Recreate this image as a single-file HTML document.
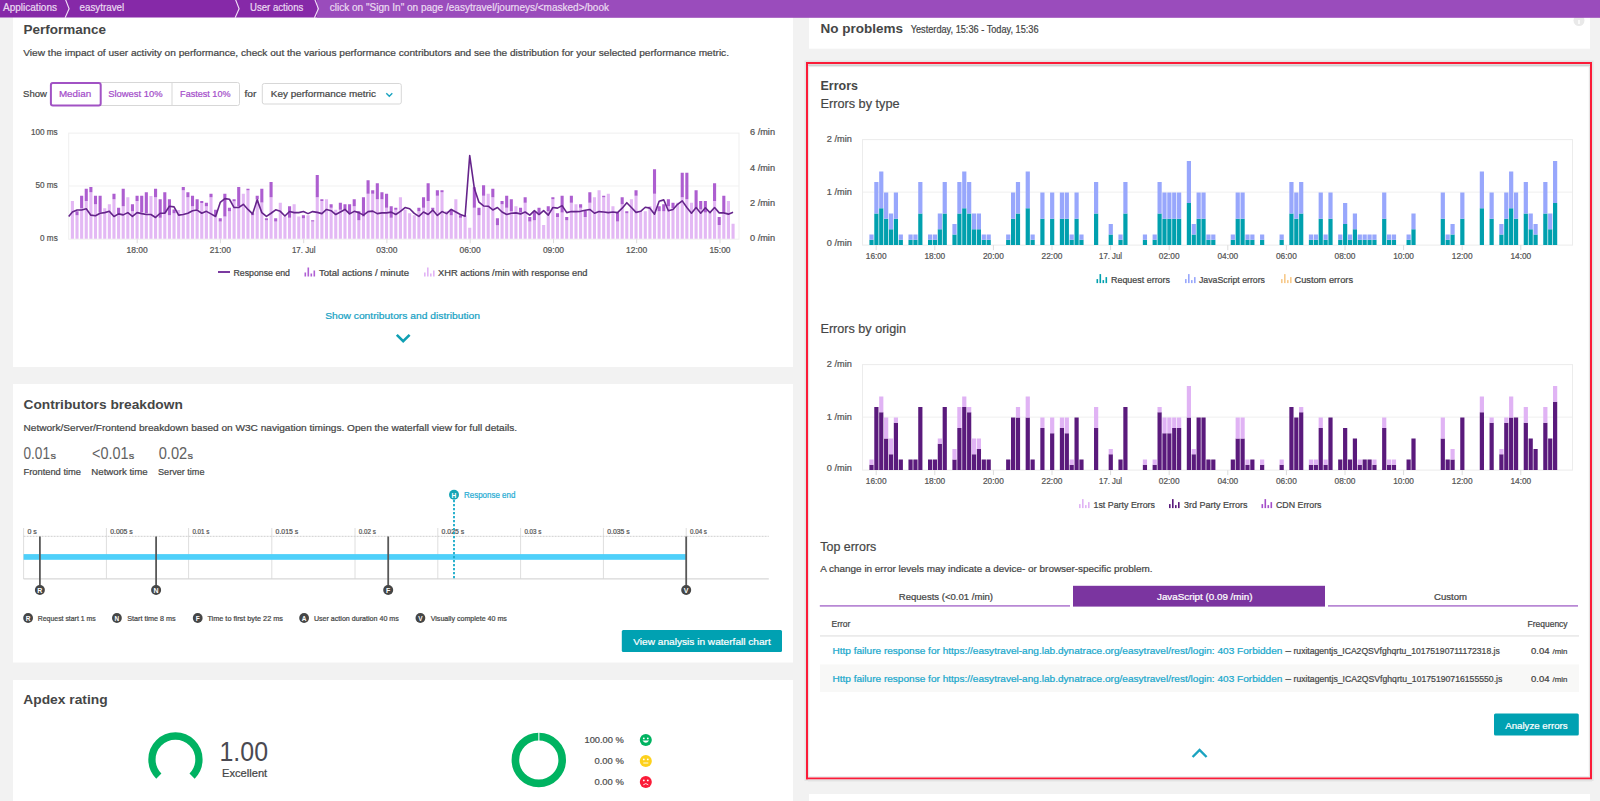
<!DOCTYPE html><html><head><meta charset="utf-8"><style>html,body{margin:0;padding:0;background:#f2f2f2;overflow:hidden}</style></head><body><svg width="1600" height="801" viewBox="0 0 1600 801" style="display:block;font-family:'Liberation Sans', sans-serif">
<rect x="0.00" y="0.00" width="1600.00" height="801.00" fill="#f2f2f2"/>
<rect x="13.00" y="17.00" width="780.00" height="350.00" fill="#ffffff"/>
<rect x="13.00" y="384.00" width="780.00" height="278.50" fill="#ffffff"/>
<rect x="13.00" y="680.00" width="780.00" height="130.00" fill="#ffffff"/>
<rect x="809.00" y="17.00" width="781.00" height="31.70" fill="#ffffff"/>
<rect x="809.00" y="794.00" width="781.00" height="20.00" fill="#ffffff"/>
<circle cx="1579" cy="20.5" r="5.5" fill="#e9e9e9"/><rect x="1578.3" y="20" width="1.4" height="4" fill="#fff"/>
<rect x="0.00" y="0.00" width="1600.00" height="17.50" fill="#8629a8"/>
<rect x="317.00" y="0.00" width="1283.00" height="17.50" fill="#9a4cbc"/>
<path d="M65.5,-0.5 L69.1,8.7 L65.1,17.8" fill="none" stroke="#f3e3f8" stroke-width="1.1"/>
<path d="M235.5,-0.5 L239.1,8.7 L235.1,17.8" fill="none" stroke="#f3e3f8" stroke-width="1.1"/>
<path d="M314.8,-0.5 L318.4,8.7 L314.4,17.8" fill="none" stroke="#f3e3f8" stroke-width="1.1"/>
<text x="3.0" y="10.5" font-size="10.4" fill="#eadaf1" stroke="#eadaf1" stroke-width="0.22" textLength="54.0" lengthAdjust="spacingAndGlyphs">Applications</text>
<text x="79.6" y="10.5" font-size="10.4" fill="#eadaf1" stroke="#eadaf1" stroke-width="0.22" textLength="44.6" lengthAdjust="spacingAndGlyphs">easytravel</text>
<text x="250.0" y="10.5" font-size="10.4" fill="#eadaf1" stroke="#eadaf1" stroke-width="0.22" textLength="53.3" lengthAdjust="spacingAndGlyphs">User actions</text>
<text x="329.8" y="10.5" font-size="10.4" fill="#eadaf1" stroke="#eadaf1" stroke-width="0.22" textLength="279.2" lengthAdjust="spacingAndGlyphs">click on "Sign In" on page /easytravel/journeys/&lt;masked&gt;/book</text>
<text x="23.5" y="33.7" font-size="12.8" font-weight="bold" fill="#454646" textLength="82.5" lengthAdjust="spacingAndGlyphs">Performance</text>
<text x="23.3" y="55.5" font-size="9.4" fill="#454646" stroke="#454646" stroke-width="0.22" textLength="705.7" lengthAdjust="spacingAndGlyphs">View the impact of user activity on performance, check out the various performance contributors and see the distribution for your selected performance metric.</text>
<text x="23.1" y="96.6" font-size="9.4" fill="#454646" stroke="#454646" stroke-width="0.22" textLength="23.8" lengthAdjust="spacingAndGlyphs">Show</text>
<rect x="50.5" y="82.5" width="189" height="23" rx="2" fill="#fff" stroke="#d7d7d7" stroke-width="1"/>
<line x1="172" y1="83" x2="172" y2="105" stroke="#d7d7d7" stroke-width="1"/>
<rect x="50.9" y="83.1" width="49.8" height="22.4" rx="2" fill="#fff" stroke="#a152c4" stroke-width="2"/>
<text x="58.9" y="96.6" font-size="9.4" fill="#a44dca" stroke="#a44dca" stroke-width="0.22" textLength="32.2" lengthAdjust="spacingAndGlyphs">Median</text>
<text x="108.2" y="96.6" font-size="9.4" fill="#a44dca" stroke="#a44dca" stroke-width="0.22" textLength="54.4" lengthAdjust="spacingAndGlyphs">Slowest 10%</text>
<text x="180.1" y="96.6" font-size="9.4" fill="#a44dca" stroke="#a44dca" stroke-width="0.22" textLength="50.4" lengthAdjust="spacingAndGlyphs">Fastest 10%</text>
<text x="244.5" y="96.9" font-size="9.4" fill="#454646" stroke="#454646" stroke-width="0.22" textLength="12.0" lengthAdjust="spacingAndGlyphs">for</text>
<rect x="262.3" y="83.5" width="139" height="20.5" rx="2" fill="#fff" stroke="#d7d7d7" stroke-width="1"/>
<text x="270.8" y="97.1" font-size="9.4" fill="#454646" stroke="#454646" stroke-width="0.22" textLength="105.2" lengthAdjust="spacingAndGlyphs">Key performance metric</text>
<path d="M386.3,93.3 L389.3,96.3 L392.3,93.3" fill="none" stroke="#1aa3c0" stroke-width="1.4"/>
<rect x="68.7" y="133.1" width="670.3" height="106.1" fill="none" stroke="#efefef" stroke-width="1"/>
<line x1="68.7" y1="186" x2="739" y2="186" stroke="#f1f1f1" stroke-width="1"/>
<path d="M70.85,238.73V200.89h3.1V238.73zM75.47,238.73V215.16h3.1V238.73zM80.09,238.73V208.15h3.1V238.73zM84.71,238.73V200.89h3.1V238.73zM89.33,238.73V192.23h3.1V238.73zM93.95,238.73V204.33h3.1V238.73zM98.57,238.73V212.61h3.1V238.73zM103.19,238.73V208.15h3.1V238.73zM107.81,238.73V204.33h3.1V238.73zM112.43,238.73V199.24h3.1V238.73zM117.05,238.73V213.89h3.1V238.73zM121.67,238.73V206.24h3.1V238.73zM126.29,238.73V197.32h3.1V238.73zM130.91,238.73V211.34h3.1V238.73zM135.53,238.73V200.89h3.1V238.73zM140.15,238.73V212.61h3.1V238.73zM144.77,238.73V213.25h3.1V238.73zM149.39,238.73V196.05h3.1V238.73zM154.01,238.73V197.32h3.1V238.73zM158.63,238.73V217.71h3.1V238.73zM163.25,238.73V213.25h3.1V238.73zM167.87,238.73V215.16h3.1V238.73zM172.49,238.73V213.25h3.1V238.73zM177.11,238.73V210.06h3.1V238.73zM181.73,238.73V190.32h3.1V238.73zM186.35,238.73V197.32h3.1V238.73zM190.97,238.73V206.24h3.1V238.73zM195.59,238.73V209.43h3.1V238.73zM200.21,238.73V203.06h3.1V238.73zM204.83,238.73V206.24h3.1V238.73zM209.45,238.73V197.32h3.1V238.73zM214.07,238.73V215.16h3.1V238.73zM218.69,238.73V221.53h3.1V238.73zM223.31,238.73V216.43h3.1V238.73zM227.93,238.73V211.34h3.1V238.73zM232.55,238.73V201.15h3.1V238.73zM237.17,238.73V206.24h3.1V238.73zM241.79,238.73V193.76h3.1V238.73zM246.41,238.73V190.32h3.1V238.73zM251.03,238.73V215.16h3.1V238.73zM255.65,238.73V199.24h3.1V238.73zM260.27,238.73V202.42h3.1V238.73zM264.89,238.73V220.25h3.1V238.73zM269.51,238.73V197.32h3.1V238.73zM274.13,238.73V221.53h3.1V238.73zM278.75,238.73V202.68h3.1V238.73zM283.37,238.73V216.43h3.1V238.73zM287.99,238.73V217.71h3.1V238.73zM292.61,238.73V204.33h3.1V238.73zM297.23,238.73V216.43h3.1V238.73zM301.85,238.73V218.34h3.1V238.73zM306.47,238.73V215.16h3.1V238.73zM311.09,238.73V221.53h3.1V238.73zM315.71,238.73V197.32h3.1V238.73zM320.33,238.73V200.89h3.1V238.73zM324.95,238.73V199.24h3.1V238.73zM329.57,238.73V207.77h3.1V238.73zM334.19,238.73V209.81h3.1V238.73zM338.81,238.73V209.81h3.1V238.73zM343.43,238.73V209.81h3.1V238.73zM348.05,238.73V213.89h3.1V238.73zM352.67,238.73V206.24h3.1V238.73zM357.29,238.73V220.25h3.1V238.73zM361.91,238.73V216.43h3.1V238.73zM366.53,238.73V193.76h3.1V238.73zM371.15,238.73V193.76h3.1V238.73zM375.77,238.73V199.24h3.1V238.73zM380.39,238.73V199.24h3.1V238.73zM385.01,238.73V207.77h3.1V238.73zM389.63,238.73V217.71h3.1V238.73zM394.25,238.73V209.81h3.1V238.73zM398.87,238.73V197.32h3.1V238.73zM403.49,238.73V209.81h3.1V238.73zM408.11,238.73V213.25h3.1V238.73zM412.73,238.73V215.16h3.1V238.73zM417.35,238.73V211.34h3.1V238.73zM421.97,238.73V207.77h3.1V238.73zM426.59,238.73V200.89h3.1V238.73zM431.21,238.73V209.81h3.1V238.73zM435.83,238.73V195.80h3.1V238.73zM440.45,238.73V192.23h3.1V238.73zM445.07,238.73V211.34h3.1V238.73zM449.69,238.73V215.16h3.1V238.73zM454.31,238.73V199.24h3.1V238.73zM458.93,238.73V217.71h3.1V238.73zM463.55,238.73V215.16h3.1V238.73zM468.17,238.73V227.64h3.1V238.73zM472.79,238.73V207.77h3.1V238.73zM477.41,238.73V215.16h3.1V238.73zM482.03,238.73V195.80h3.1V238.73zM486.65,238.73V193.76h3.1V238.73zM491.27,238.73V197.32h3.1V238.73zM495.89,238.73V225.35h3.1V238.73zM500.51,238.73V204.33h3.1V238.73zM505.13,238.73V207.77h3.1V238.73zM509.75,238.73V211.34h3.1V238.73zM514.37,238.73V206.24h3.1V238.73zM518.99,238.73V212.61h3.1V238.73zM523.61,238.73V202.68h3.1V238.73zM528.23,238.73V221.53h3.1V238.73zM532.85,238.73V220.25h3.1V238.73zM537.47,238.73V213.25h3.1V238.73zM542.09,238.73V225.10h3.1V238.73zM546.71,238.73V211.34h3.1V238.73zM551.33,238.73V199.24h3.1V238.73zM555.95,238.73V217.07h3.1V238.73zM560.57,238.73V212.61h3.1V238.73zM565.19,238.73V220.25h3.1V238.73zM569.81,238.73V202.68h3.1V238.73zM574.43,238.73V204.33h3.1V238.73zM579.05,238.73V207.77h3.1V238.73zM583.67,238.73V217.07h3.1V238.73zM588.29,238.73V202.68h3.1V238.73zM592.91,238.73V197.32h3.1V238.73zM597.53,238.73V190.32h3.1V238.73zM602.15,238.73V197.32h3.1V238.73zM606.77,238.73V193.76h3.1V238.73zM611.39,238.73V206.24h3.1V238.73zM616.01,238.73V221.53h3.1V238.73zM620.63,238.73V204.33h3.1V238.73zM625.25,238.73V213.25h3.1V238.73zM629.87,238.73V199.24h3.1V238.73zM634.49,238.73V195.80h3.1V238.73zM639.11,238.73V211.34h3.1V238.73zM643.73,238.73V211.34h3.1V238.73zM648.35,238.73V206.24h3.1V238.73zM652.97,238.73V193.76h3.1V238.73zM657.59,238.73V211.34h3.1V238.73zM662.21,238.73V211.34h3.1V238.73zM666.83,238.73V206.24h3.1V238.73zM671.45,238.73V208.15h3.1V238.73zM676.07,238.73V202.68h3.1V238.73zM680.69,238.73V197.32h3.1V238.73zM685.31,238.73V199.24h3.1V238.73zM689.93,238.73V202.68h3.1V238.73zM694.55,238.73V208.15h3.1V238.73zM699.17,238.73V209.43h3.1V238.73zM703.79,238.73V212.61h3.1V238.73zM708.41,238.73V212.61h3.1V238.73zM713.03,238.73V200.89h3.1V238.73zM717.65,238.73V225.10h3.1V238.73zM722.27,238.73V211.97h3.1V238.73zM726.89,238.73V200.89h3.1V238.73zM731.51,238.73V223.82h3.1V238.73z" fill="#e3b8f4"/>
<path d="M75.47,215.16V211.34h3.1V215.16zM80.09,208.15V195.80h3.1V208.15zM84.71,200.89V188.79h3.1V200.89zM89.33,192.23V186.88h3.1V192.23zM93.95,204.33V195.80h3.1V204.33zM98.57,212.61V195.80h3.1V212.61zM112.43,199.24V193.76h3.1V199.24zM117.05,213.89V207.77h3.1V213.89zM121.67,206.24V188.79h3.1V206.24zM130.91,211.34V204.33h3.1V211.34zM135.53,200.89V195.80h3.1V200.89zM140.15,212.61V195.80h3.1V212.61zM144.77,213.25V192.23h3.1V213.25zM154.01,197.32V188.79h3.1V197.32zM158.63,217.71V199.24h3.1V217.71zM163.25,213.25V192.23h3.1V213.25zM167.87,215.16V199.24h3.1V215.16zM172.49,213.25V209.43h3.1V213.25zM181.73,190.32V186.88h3.1V190.32zM186.35,197.32V192.23h3.1V197.32zM190.97,206.24V195.80h3.1V206.24zM195.59,209.43V199.24h3.1V209.43zM200.21,203.06V200.89h3.1V203.06zM204.83,206.24V202.68h3.1V206.24zM209.45,197.32V193.76h3.1V197.32zM214.07,215.16V209.81h3.1V215.16zM218.69,221.53V218.34h3.1V221.53zM223.31,216.43V193.76h3.1V216.43zM227.93,211.34V207.77h3.1V211.34zM232.55,201.15V199.24h3.1V201.15zM237.17,206.24V186.88h3.1V206.24zM246.41,190.32V188.79h3.1V190.32zM251.03,215.16V213.25h3.1V215.16zM255.65,199.24V195.80h3.1V199.24zM260.27,202.42V188.79h3.1V202.42zM264.89,220.25V218.34h3.1V220.25zM269.51,197.32V182.04h3.1V197.32zM274.13,221.53V218.34h3.1V221.53zM287.99,217.71V206.24h3.1V217.71zM301.85,218.34V215.16h3.1V218.34zM311.09,221.53V220.25h3.1V221.53zM315.71,197.32V175.03h3.1V197.32zM320.33,200.89V199.24h3.1V200.89zM329.57,207.77V204.33h3.1V207.77zM338.81,209.81V202.68h3.1V209.81zM343.43,209.81V204.33h3.1V209.81zM348.05,213.89V204.33h3.1V213.89zM352.67,206.24V199.24h3.1V206.24zM357.29,220.25V211.34h3.1V220.25zM361.91,216.43V197.32h3.1V216.43zM366.53,193.76V180.13h3.1V193.76zM371.15,193.76V190.32h3.1V193.76zM375.77,199.24V183.31h3.1V199.24zM380.39,199.24V192.23h3.1V199.24zM385.01,207.77V193.76h3.1V207.77zM389.63,217.71V206.24h3.1V217.71zM394.25,209.81V207.77h3.1V209.81zM417.35,211.34V207.77h3.1V211.34zM421.97,207.77V197.32h3.1V207.77zM426.59,200.89V183.31h3.1V200.89zM431.21,209.81V207.77h3.1V209.81zM435.83,195.80V190.32h3.1V195.80zM440.45,192.23V190.32h3.1V192.23zM449.69,215.16V209.43h3.1V215.16zM458.93,217.71V215.16h3.1V217.71zM472.79,207.77V187.13h3.1V207.77zM477.41,215.16V207.77h3.1V215.16zM482.03,195.80V185.22h3.1V195.80zM491.27,197.32V188.79h3.1V197.32zM495.89,225.35V218.34h3.1V225.35zM500.51,204.33V200.89h3.1V204.33zM505.13,207.77V195.80h3.1V207.77zM509.75,211.34V199.24h3.1V211.34zM518.99,212.61V207.77h3.1V212.61zM523.61,202.68V197.32h3.1V202.68zM528.23,221.53V217.07h3.1V221.53zM532.85,220.25V211.34h3.1V220.25zM537.47,213.25V207.77h3.1V213.25zM546.71,211.34V206.24h3.1V211.34zM551.33,199.24V197.32h3.1V199.24zM555.95,217.07V213.25h3.1V217.07zM560.57,212.61V195.80h3.1V212.61zM565.19,220.25V217.07h3.1V220.25zM569.81,202.68V195.80h3.1V202.68zM579.05,207.77V204.33h3.1V207.77zM583.67,217.07V210.70h3.1V217.07zM588.29,202.68V192.23h3.1V202.68zM602.15,197.32V195.80h3.1V197.32zM616.01,221.53V212.61h3.1V221.53zM620.63,204.33V197.32h3.1V204.33zM625.25,213.25V211.34h3.1V213.25zM634.49,195.80V190.32h3.1V195.80zM652.97,193.76V169.30h3.1V193.76zM657.59,211.34V206.24h3.1V211.34zM662.21,211.34V204.33h3.1V211.34zM666.83,206.24V199.24h3.1V206.24zM671.45,208.15V202.68h3.1V208.15zM680.69,197.32V172.87h3.1V197.32zM685.31,199.24V172.87h3.1V199.24zM694.55,208.15V190.32h3.1V208.15zM699.17,209.43V200.89h3.1V209.43zM703.79,212.61V200.89h3.1V212.61zM713.03,200.89V183.31h3.1V200.89zM717.65,225.10V217.07h3.1V225.10zM722.27,211.97V195.80h3.1V211.97z" fill="#ad5ed0"/>
<polyline points="68.7,216.43 72.40,211.97 77.02,210.06 81.64,210.06 86.26,208.79 90.88,215.16 95.50,215.80 100.12,213.25 104.74,212.61 109.36,211.34 113.98,216.43 118.60,213.89 123.22,214.90 127.84,212.61 132.46,216.43 137.08,212.61 141.70,213.63 146.32,214.52 150.94,214.52 155.56,217.45 160.18,213.25 164.80,213.25 169.42,206.24 174.04,206.88 178.66,215.16 183.28,214.52 187.90,213.25 192.52,210.70 197.14,210.06 201.76,213.25 206.38,211.34 211.00,213.89 215.62,216.43 220.24,202.42 224.86,198.60 229.48,199.24 234.10,207.52 238.72,207.52 243.34,204.33 247.96,209.43 252.58,213.89 257.20,199.87 261.82,212.61 266.44,216.43 271.06,213.25 275.68,209.81 280.30,211.34 284.92,216.05 289.54,211.46 294.16,212.61 298.78,212.61 303.40,211.59 308.02,213.63 312.64,211.59 317.26,212.36 321.88,213.63 326.50,209.43 331.12,210.70 335.74,214.52 340.36,211.97 344.98,209.43 349.60,213.89 354.22,211.34 358.84,212.61 363.46,215.16 368.08,211.59 372.70,211.08 377.32,213.63 381.94,212.87 386.56,212.87 391.18,212.10 395.80,214.52 400.42,211.34 405.04,207.52 409.66,208.79 414.28,213.38 418.90,216.43 423.52,211.97 428.14,214.52 432.76,210.06 437.38,215.41 442.00,211.59 446.62,213.63 451.24,209.43 455.86,211.97 460.48,214.52 465.10,216.18 469.72,155.54 474.34,188.41 478.96,202.17 483.58,205.99 488.20,206.24 492.82,209.94 497.44,207.52 502.06,211.97 506.68,214.52 511.30,213.25 515.92,212.87 520.54,213.89 525.16,211.97 529.78,215.16 534.40,210.70 539.02,214.52 543.64,210.70 548.26,215.16 552.88,207.52 557.50,208.15 562.12,205.61 566.74,212.61 571.36,211.59 575.98,211.59 580.60,211.34 585.22,210.32 589.84,209.43 594.46,213.25 599.08,211.59 603.70,211.97 608.32,212.61 612.94,211.97 617.56,212.61 622.18,208.15 626.80,202.68 631.42,207.52 636.04,212.36 640.66,211.34 645.28,207.26 649.90,208.15 654.52,214.14 659.14,201.15 663.76,199.87 668.38,210.70 673.00,209.43 677.62,204.33 682.24,200.89 686.86,207.52 691.48,213.25 696.10,207.52 700.72,213.25 705.34,207.77 709.96,212.61 714.58,207.52 719.20,212.87 723.82,212.87 728.44,214.14 733.06,212.36" fill="none" stroke="#65248b" stroke-width="1.6" stroke-linejoin="round"/>
<line x1="137.2" y1="239.2" x2="137.2" y2="243.2" stroke="#dcdcdc" stroke-width="1"/>
<text x="137.2" y="253.0" font-size="8.4" fill="#555" stroke="#555" stroke-width="0.22" textLength="21.2" lengthAdjust="spacingAndGlyphs" text-anchor="middle">18:00</text>
<line x1="220.4" y1="239.2" x2="220.4" y2="243.2" stroke="#dcdcdc" stroke-width="1"/>
<text x="220.4" y="253.0" font-size="8.4" fill="#555" stroke="#555" stroke-width="0.22" textLength="21.2" lengthAdjust="spacingAndGlyphs" text-anchor="middle">21:00</text>
<line x1="303.7" y1="239.2" x2="303.7" y2="243.2" stroke="#dcdcdc" stroke-width="1"/>
<text x="303.7" y="253.0" font-size="8.4" fill="#555" stroke="#555" stroke-width="0.22" textLength="23.5" lengthAdjust="spacingAndGlyphs" text-anchor="middle">17. Jul</text>
<line x1="386.9" y1="239.2" x2="386.9" y2="243.2" stroke="#dcdcdc" stroke-width="1"/>
<text x="386.9" y="253.0" font-size="8.4" fill="#555" stroke="#555" stroke-width="0.22" textLength="21.2" lengthAdjust="spacingAndGlyphs" text-anchor="middle">03:00</text>
<line x1="470.2" y1="239.2" x2="470.2" y2="243.2" stroke="#dcdcdc" stroke-width="1"/>
<text x="470.2" y="253.0" font-size="8.4" fill="#555" stroke="#555" stroke-width="0.22" textLength="21.2" lengthAdjust="spacingAndGlyphs" text-anchor="middle">06:00</text>
<line x1="553.5" y1="239.2" x2="553.5" y2="243.2" stroke="#dcdcdc" stroke-width="1"/>
<text x="553.5" y="253.0" font-size="8.4" fill="#555" stroke="#555" stroke-width="0.22" textLength="21.2" lengthAdjust="spacingAndGlyphs" text-anchor="middle">09:00</text>
<line x1="636.7" y1="239.2" x2="636.7" y2="243.2" stroke="#dcdcdc" stroke-width="1"/>
<text x="636.7" y="253.0" font-size="8.4" fill="#555" stroke="#555" stroke-width="0.22" textLength="21.2" lengthAdjust="spacingAndGlyphs" text-anchor="middle">12:00</text>
<line x1="720.0" y1="239.2" x2="720.0" y2="243.2" stroke="#dcdcdc" stroke-width="1"/>
<text x="720.0" y="253.0" font-size="8.4" fill="#555" stroke="#555" stroke-width="0.22" textLength="21.2" lengthAdjust="spacingAndGlyphs" text-anchor="middle">15:00</text>
<text x="57.7" y="135.4" font-size="8.4" fill="#555" stroke="#555" stroke-width="0.22" textLength="26.8" lengthAdjust="spacingAndGlyphs" text-anchor="end">100 ms</text>
<text x="57.7" y="188.2" font-size="8.4" fill="#555" stroke="#555" stroke-width="0.22" textLength="22.3" lengthAdjust="spacingAndGlyphs" text-anchor="end">50 ms</text>
<text x="57.7" y="240.8" font-size="8.4" fill="#555" stroke="#555" stroke-width="0.22" textLength="17.6" lengthAdjust="spacingAndGlyphs" text-anchor="end">0 ms</text>
<text x="750.0" y="135.4" font-size="8.4" fill="#555" stroke="#555" stroke-width="0.22" textLength="25.0" lengthAdjust="spacingAndGlyphs">6 /min</text>
<text x="750.0" y="170.5" font-size="8.4" fill="#555" stroke="#555" stroke-width="0.22" textLength="25.0" lengthAdjust="spacingAndGlyphs">4 /min</text>
<text x="750.0" y="205.6" font-size="8.4" fill="#555" stroke="#555" stroke-width="0.22" textLength="25.0" lengthAdjust="spacingAndGlyphs">2 /min</text>
<text x="750.0" y="240.7" font-size="8.4" fill="#555" stroke="#555" stroke-width="0.22" textLength="25.0" lengthAdjust="spacingAndGlyphs">0 /min</text>
<line x1="218" y1="272" x2="230" y2="272" stroke="#7b3aa0" stroke-width="2"/>
<text x="233.5" y="275.8" font-size="8.5" fill="#454646" stroke="#454646" stroke-width="0.22" textLength="56.5" lengthAdjust="spacingAndGlyphs">Response end</text>
<rect x="304.50" y="272.50" width="1.60" height="4.00" fill="#b060d4"/>
<rect x="307.50" y="267.50" width="1.60" height="9.00" fill="#b060d4"/>
<rect x="310.50" y="273.50" width="1.60" height="3.00" fill="#b060d4"/>
<rect x="313.50" y="270.50" width="1.60" height="6.00" fill="#b060d4"/>
<text x="319.0" y="275.8" font-size="8.5" fill="#454646" stroke="#454646" stroke-width="0.22" textLength="90.0" lengthAdjust="spacingAndGlyphs">Total actions / minute</text>
<rect x="424.00" y="272.50" width="1.60" height="4.00" fill="#e2b4f5"/>
<rect x="427.00" y="267.50" width="1.60" height="9.00" fill="#e2b4f5"/>
<rect x="430.00" y="273.50" width="1.60" height="3.00" fill="#e2b4f5"/>
<rect x="433.00" y="270.50" width="1.60" height="6.00" fill="#e2b4f5"/>
<text x="438.0" y="275.8" font-size="8.5" fill="#454646" stroke="#454646" stroke-width="0.22" textLength="149.5" lengthAdjust="spacingAndGlyphs">XHR actions /min with response end</text>
<text x="325.2" y="319.4" font-size="9.3" fill="#18a2c4" stroke="#18a2c4" stroke-width="0.22" textLength="154.8" lengthAdjust="spacingAndGlyphs">Show contributors and distribution</text>
<path d="M396.8,334.8 L403.2,341.2 L409.6,334.8" fill="none" stroke="#0f9fb3" stroke-width="2.6"/>
<text x="23.5" y="408.6" font-size="12.8" font-weight="bold" fill="#454646" textLength="159.3" lengthAdjust="spacingAndGlyphs">Contributors breakdown</text>
<text x="23.5" y="430.6" font-size="9.4" fill="#454646" stroke="#454646" stroke-width="0.22" textLength="493.5" lengthAdjust="spacingAndGlyphs">Network/Server/Frontend breakdown based on W3C navigation timings. Open the waterfall view for full details.</text>
<text x="23.5" y="458.8" font-size="16.3" fill="#626262" textLength="26.5" lengthAdjust="spacingAndGlyphs">0.01</text>
<text x="50.5" y="458.8" font-size="9" fill="#555" stroke="#555" stroke-width="0.22" textLength="5.5" lengthAdjust="spacingAndGlyphs">s</text>
<text x="92.0" y="458.8" font-size="16.3" fill="#626262" textLength="36.5" lengthAdjust="spacingAndGlyphs">&lt;0.01</text>
<text x="128.8" y="458.8" font-size="9" fill="#555" stroke="#555" stroke-width="0.22" textLength="5.5" lengthAdjust="spacingAndGlyphs">s</text>
<text x="158.7" y="458.8" font-size="16.3" fill="#626262" textLength="28.5" lengthAdjust="spacingAndGlyphs">0.02</text>
<text x="187.5" y="458.8" font-size="9" fill="#555" stroke="#555" stroke-width="0.22" textLength="5.5" lengthAdjust="spacingAndGlyphs">s</text>
<text x="23.5" y="474.6" font-size="9.6" fill="#454646" stroke="#454646" stroke-width="0.22" textLength="57.5" lengthAdjust="spacingAndGlyphs">Frontend time</text>
<text x="91.3" y="474.6" font-size="9.6" fill="#454646" stroke="#454646" stroke-width="0.22" textLength="56.4" lengthAdjust="spacingAndGlyphs">Network time</text>
<text x="158.0" y="474.6" font-size="9.6" fill="#454646" stroke="#454646" stroke-width="0.22" textLength="46.5" lengthAdjust="spacingAndGlyphs">Server time</text>
<line x1="23.6" y1="528" x2="23.6" y2="579" stroke="#dedede" stroke-width="1"/>
<text x="27.4" y="533.9" font-size="6.4" fill="#555" stroke="#555" stroke-width="0.22" textLength="9.4" lengthAdjust="spacingAndGlyphs">0 s</text>
<line x1="106.4" y1="528" x2="106.4" y2="579" stroke="#dedede" stroke-width="1"/>
<text x="110.2" y="533.9" font-size="6.4" fill="#555" stroke="#555" stroke-width="0.22" textLength="22.5" lengthAdjust="spacingAndGlyphs">0.005 s</text>
<line x1="188.6" y1="528" x2="188.6" y2="579" stroke="#dedede" stroke-width="1"/>
<text x="192.4" y="533.9" font-size="6.4" fill="#555" stroke="#555" stroke-width="0.22" textLength="17.0" lengthAdjust="spacingAndGlyphs">0.01 s</text>
<line x1="271.8" y1="528" x2="271.8" y2="579" stroke="#dedede" stroke-width="1"/>
<text x="275.6" y="533.9" font-size="6.4" fill="#555" stroke="#555" stroke-width="0.22" textLength="22.5" lengthAdjust="spacingAndGlyphs">0.015 s</text>
<line x1="355.0" y1="528" x2="355.0" y2="579" stroke="#dedede" stroke-width="1"/>
<text x="358.8" y="533.9" font-size="6.4" fill="#555" stroke="#555" stroke-width="0.22" textLength="17.0" lengthAdjust="spacingAndGlyphs">0.02 s</text>
<line x1="437.8" y1="528" x2="437.8" y2="579" stroke="#dedede" stroke-width="1"/>
<text x="441.6" y="533.9" font-size="6.4" fill="#555" stroke="#555" stroke-width="0.22" textLength="22.5" lengthAdjust="spacingAndGlyphs">0.025 s</text>
<line x1="520.6" y1="528" x2="520.6" y2="579" stroke="#dedede" stroke-width="1"/>
<text x="524.4" y="533.9" font-size="6.4" fill="#555" stroke="#555" stroke-width="0.22" textLength="17.0" lengthAdjust="spacingAndGlyphs">0.03 s</text>
<line x1="603.4" y1="528" x2="603.4" y2="579" stroke="#dedede" stroke-width="1"/>
<text x="607.2" y="533.9" font-size="6.4" fill="#555" stroke="#555" stroke-width="0.22" textLength="22.5" lengthAdjust="spacingAndGlyphs">0.035 s</text>
<line x1="686.2" y1="528" x2="686.2" y2="579" stroke="#dedede" stroke-width="1"/>
<text x="690.0" y="533.9" font-size="6.4" fill="#555" stroke="#555" stroke-width="0.22" textLength="17.0" lengthAdjust="spacingAndGlyphs">0.04 s</text>
<line x1="23.6" y1="536.3" x2="768.8" y2="536.3" stroke="#cfcfcf" stroke-width="1" stroke-dasharray="2,1"/>
<line x1="23.6" y1="578.8" x2="768.8" y2="578.8" stroke="#d7d7d7" stroke-width="1.2"/>
<rect x="23.60" y="554.10" width="662.60" height="5.70" fill="#4fd0fa"/>
<line x1="454" y1="500" x2="454" y2="579" stroke="#16a9c8" stroke-width="1.8" stroke-dasharray="2.2,1.8"/>
<circle cx="454" cy="494.7" r="5" fill="#16a5b5"/>
<text x="451.6" y="497.6" font-size="7" font-weight="bold" fill="#fff" textLength="4.8" lengthAdjust="spacingAndGlyphs">H</text>
<text x="464.0" y="498.1" font-size="8.6" fill="#26acd3" stroke="#26acd3" stroke-width="0.22" textLength="51.4" lengthAdjust="spacingAndGlyphs">Response end</text>
<line x1="39.9" y1="536.5" x2="39.9" y2="586" stroke="#585858" stroke-width="1.8"/>
<circle cx="39.9" cy="590" r="5" fill="#454646"/>
<text x="39.9" y="592.6" font-size="7" font-weight="bold" fill="#fff" text-anchor="middle">R</text>
<line x1="156.1" y1="536.5" x2="156.1" y2="586" stroke="#585858" stroke-width="1.8"/>
<circle cx="156.1" cy="590" r="5" fill="#454646"/>
<text x="156.1" y="592.6" font-size="7" font-weight="bold" fill="#fff" text-anchor="middle">N</text>
<line x1="388.2" y1="536.5" x2="388.2" y2="586" stroke="#585858" stroke-width="1.8"/>
<circle cx="388.2" cy="590" r="5" fill="#454646"/>
<text x="388.2" y="592.6" font-size="7" font-weight="bold" fill="#fff" text-anchor="middle">F</text>
<line x1="686.2" y1="536.5" x2="686.2" y2="586" stroke="#585858" stroke-width="1.8"/>
<circle cx="686.2" cy="590" r="5" fill="#454646"/>
<text x="686.2" y="592.6" font-size="7" font-weight="bold" fill="#fff" text-anchor="middle">V</text>
<circle cx="28.1" cy="618" r="4.9" fill="#454646"/>
<text x="28.1" y="620.5" font-size="6.5" font-weight="bold" fill="#fff" text-anchor="middle">R</text>
<text x="37.8" y="620.6" font-size="7.4" fill="#454646" stroke="#454646" stroke-width="0.22" textLength="57.9" lengthAdjust="spacingAndGlyphs">Request start 1 ms</text>
<circle cx="116.9" cy="618" r="4.9" fill="#454646"/>
<text x="116.9" y="620.5" font-size="6.5" font-weight="bold" fill="#fff" text-anchor="middle">N</text>
<text x="127.3" y="620.6" font-size="7.4" fill="#454646" stroke="#454646" stroke-width="0.22" textLength="48.4" lengthAdjust="spacingAndGlyphs">Start time 8 ms</text>
<circle cx="197.7" cy="618" r="4.9" fill="#454646"/>
<text x="197.7" y="620.5" font-size="6.5" font-weight="bold" fill="#fff" text-anchor="middle">F</text>
<text x="207.4" y="620.6" font-size="7.4" fill="#454646" stroke="#454646" stroke-width="0.22" textLength="75.6" lengthAdjust="spacingAndGlyphs">Time to first byte 22 ms</text>
<circle cx="304.1" cy="618" r="4.9" fill="#454646"/>
<text x="304.1" y="620.5" font-size="6.5" font-weight="bold" fill="#fff" text-anchor="middle">A</text>
<text x="313.9" y="620.6" font-size="7.4" fill="#454646" stroke="#454646" stroke-width="0.22" textLength="84.9" lengthAdjust="spacingAndGlyphs">User action duration 40 ms</text>
<circle cx="420.4" cy="618" r="4.9" fill="#454646"/>
<text x="420.4" y="620.5" font-size="6.5" font-weight="bold" fill="#fff" text-anchor="middle">V</text>
<text x="430.7" y="620.6" font-size="7.4" fill="#454646" stroke="#454646" stroke-width="0.22" textLength="76.2" lengthAdjust="spacingAndGlyphs">Visually complete 40 ms</text>
<rect x="621.8" y="630" width="160.2" height="22" rx="1.5" fill="#00a1b2"/>
<text x="633.3" y="644.8" font-size="9.8" fill="#ffffff" stroke="#ffffff" stroke-width="0.22" textLength="137.5" lengthAdjust="spacingAndGlyphs">View analysis in waterfall chart</text>
<text x="23.3" y="704.1" font-size="12.8" font-weight="bold" fill="#454646" textLength="84.3" lengthAdjust="spacingAndGlyphs">Apdex rating</text>
<path d="M158.83,776.12 A23.5,23.5 0 1 1 192.07,776.12" fill="none" stroke="#00b262" stroke-width="7.3"/>
<text x="219.5" y="761.4" font-size="27.5" fill="#4a4a52" textLength="48.5" lengthAdjust="spacingAndGlyphs">1.00</text>
<text x="222.0" y="776.8" font-size="11" fill="#454646" stroke="#454646" stroke-width="0.22" textLength="45.2" lengthAdjust="spacingAndGlyphs">Excellent</text>
<circle cx="538.8" cy="760" r="23.4" fill="none" stroke="#00b361" stroke-width="7.6"/>
<rect x="538.30" y="731.50" width="1.10" height="10.00" fill="#ffffff"/>
<text x="623.8" y="743.4" font-size="9.4" fill="#4d4d4d" stroke="#4d4d4d" stroke-width="0.22" textLength="39.3" lengthAdjust="spacingAndGlyphs" text-anchor="end">100.00 %</text>
<text x="623.8" y="764.4" font-size="9.4" fill="#4d4d4d" stroke="#4d4d4d" stroke-width="0.22" textLength="29.3" lengthAdjust="spacingAndGlyphs" text-anchor="end">0.00 %</text>
<text x="623.8" y="785.4" font-size="9.4" fill="#4d4d4d" stroke="#4d4d4d" stroke-width="0.22" textLength="29.3" lengthAdjust="spacingAndGlyphs" text-anchor="end">0.00 %</text>
<circle cx="645.8" cy="740" r="6" fill="#00b361"/>
<circle cx="643.8" cy="738.4" r="0.9" fill="#fff"/><circle cx="647.8" cy="738.4" r="0.9" fill="#fff"/>
<path d="M642.5,740.5 Q645.8,745 649.0999999999999,740.5Z" fill="#fff"/>
<circle cx="645.8" cy="761" r="6" fill="#fdd11c"/>
<circle cx="643.8" cy="759.4" r="0.9" fill="#fff"/><circle cx="647.8" cy="759.4" r="0.9" fill="#fff"/>
<line x1="643.3" y1="763" x2="648.3" y2="763" stroke="#fff" stroke-width="0.9"/>
<circle cx="645.8" cy="782" r="6" fill="#fb1b38"/>
<circle cx="643.8" cy="780.4" r="0.9" fill="#fff"/><circle cx="647.8" cy="780.4" r="0.9" fill="#fff"/>
<path d="M643.3,784.8 Q645.8,782.4 648.3,784.8" fill="none" stroke="#fff" stroke-width="0.9"/>
<text x="820.5" y="33.3" font-size="12.8" font-weight="bold" fill="#454646" textLength="82.5" lengthAdjust="spacingAndGlyphs">No problems</text>
<text x="910.7" y="33.3" font-size="10" fill="#454646" stroke="#454646" stroke-width="0.22" textLength="127.9" lengthAdjust="spacingAndGlyphs">Yesterday, 15:36 - Today, 15:36</text>
<rect x="806.00" y="62.00" width="786.00" height="717.50" fill="#ffffff"/>
<rect x="805.2" y="61.2" width="787.6" height="719.1" fill="none" stroke="#e2e4e4" stroke-width="1.4"/>
<rect x="808.6" y="64.6" width="780.8" height="712.3" fill="none" stroke="#e6e6e6" stroke-width="1.2"/>
<rect x="807" y="63" width="784" height="715.5" fill="none" stroke="#fb1b38" stroke-width="2"/>
<rect x="808.00" y="64.50" width="782.00" height="1.60" fill="#cfd2d2"/>
<rect x="808.00" y="66.10" width="782.00" height="1.00" fill="#e8e8e8"/>
<rect x="808.00" y="779.50" width="784.00" height="1.20" fill="#dedede"/>
<rect x="808.00" y="780.70" width="784.00" height="1.30" fill="#ebebeb"/>
<rect x="1592.00" y="64.00" width="1.20" height="716.00" fill="#e4e4e4"/>
<text x="820.5" y="90.4" font-size="12.8" font-weight="bold" fill="#454646" textLength="37.5" lengthAdjust="spacingAndGlyphs">Errors</text>
<text x="820.5" y="107.9" font-size="13.7" fill="#454646" stroke="#454646" stroke-width="0.22" textLength="79.1" lengthAdjust="spacingAndGlyphs">Errors by type</text>
<rect x="862.5" y="139.6" width="710.0" height="105.5" fill="none" stroke="#ececec" stroke-width="1"/>
<line x1="862.5" y1="192.1" x2="1572.5" y2="192.1" stroke="#efefef" stroke-width="1"/>
<path d="M869.40,245.10V239.85h4.2V245.10zM874.28,245.10V213.60h4.2V245.10zM879.17,245.10V208.35h4.2V245.10zM884.05,245.10V218.85h4.2V245.10zM888.93,245.10V229.35h4.2V245.10zM893.81,245.10V218.85h4.2V245.10zM898.70,245.10V239.85h4.2V245.10zM908.46,245.10V239.85h4.2V245.10zM913.35,245.10V239.85h4.2V245.10zM918.23,245.10V213.60h4.2V245.10zM928.00,245.10V239.85h4.2V245.10zM932.88,245.10V239.85h4.2V245.10zM937.76,245.10V229.35h4.2V245.10zM942.64,245.10V213.60h4.2V245.10zM952.41,245.10V234.60h4.2V245.10zM957.29,245.10V213.60h4.2V245.10zM962.18,245.10V208.35h4.2V245.10zM967.06,245.10V213.60h4.2V245.10zM971.94,245.10V229.35h4.2V245.10zM976.83,245.10V229.35h4.2V245.10zM981.71,245.10V239.85h4.2V245.10zM986.59,245.10V239.85h4.2V245.10zM1006.12,245.10V239.85h4.2V245.10zM1011.01,245.10V218.85h4.2V245.10zM1015.89,245.10V213.60h4.2V245.10zM1025.66,245.10V208.35h4.2V245.10zM1030.54,245.10V239.85h4.2V245.10zM1040.31,245.10V218.85h4.2V245.10zM1050.07,245.10V218.85h4.2V245.10zM1059.84,245.10V218.85h4.2V245.10zM1064.72,245.10V218.85h4.2V245.10zM1069.60,245.10V239.85h4.2V245.10zM1074.49,245.10V218.85h4.2V245.10zM1079.37,245.10V239.85h4.2V245.10zM1094.02,245.10V213.60h4.2V245.10zM1108.67,245.10V234.60h4.2V245.10zM1118.43,245.10V239.85h4.2V245.10zM1123.32,245.10V213.60h4.2V245.10zM1142.85,245.10V239.85h4.2V245.10zM1152.61,245.10V239.85h4.2V245.10zM1157.50,245.10V213.60h4.2V245.10zM1162.38,245.10V218.85h4.2V245.10zM1167.26,245.10V218.85h4.2V245.10zM1172.15,245.10V218.85h4.2V245.10zM1177.03,245.10V218.85h4.2V245.10zM1186.80,245.10V203.10h4.2V245.10zM1191.68,245.10V234.60h4.2V245.10zM1196.56,245.10V218.85h4.2V245.10zM1201.44,245.10V218.85h4.2V245.10zM1206.33,245.10V239.85h4.2V245.10zM1211.21,245.10V239.85h4.2V245.10zM1230.74,245.10V239.85h4.2V245.10zM1235.62,245.10V218.85h4.2V245.10zM1240.51,245.10V218.85h4.2V245.10zM1245.39,245.10V239.85h4.2V245.10zM1250.27,245.10V239.85h4.2V245.10zM1260.04,245.10V239.85h4.2V245.10zM1279.57,245.10V239.85h4.2V245.10zM1289.34,245.10V213.60h4.2V245.10zM1294.22,245.10V218.85h4.2V245.10zM1299.10,245.10V213.60h4.2V245.10zM1308.87,245.10V239.85h4.2V245.10zM1313.75,245.10V239.85h4.2V245.10zM1318.64,245.10V218.85h4.2V245.10zM1323.52,245.10V239.85h4.2V245.10zM1328.40,245.10V218.85h4.2V245.10zM1338.17,245.10V239.85h4.2V245.10zM1343.05,245.10V224.10h4.2V245.10zM1347.93,245.10V239.85h4.2V245.10zM1352.82,245.10V229.35h4.2V245.10zM1357.70,245.10V239.85h4.2V245.10zM1362.58,245.10V239.85h4.2V245.10zM1367.47,245.10V239.85h4.2V245.10zM1372.35,245.10V239.85h4.2V245.10zM1382.12,245.10V218.85h4.2V245.10zM1387.00,245.10V239.85h4.2V245.10zM1391.88,245.10V239.85h4.2V245.10zM1406.53,245.10V239.85h4.2V245.10zM1411.41,245.10V229.35h4.2V245.10zM1440.71,245.10V218.85h4.2V245.10zM1445.59,245.10V239.85h4.2V245.10zM1450.48,245.10V234.60h4.2V245.10zM1460.24,245.10V218.85h4.2V245.10zM1479.78,245.10V208.35h4.2V245.10zM1489.54,245.10V218.85h4.2V245.10zM1499.31,245.10V234.60h4.2V245.10zM1504.19,245.10V218.85h4.2V245.10zM1509.07,245.10V208.35h4.2V245.10zM1513.96,245.10V218.85h4.2V245.10zM1523.72,245.10V213.60h4.2V245.10zM1528.61,245.10V229.35h4.2V245.10zM1533.49,245.10V234.60h4.2V245.10zM1543.25,245.10V213.60h4.2V245.10zM1548.14,245.10V229.35h4.2V245.10zM1553.02,245.10V203.10h4.2V245.10z" fill="#00a0ae"/>
<path d="M869.40,239.85V234.60h4.2V239.85zM874.28,213.60V182.10h4.2V213.60zM879.17,208.35V171.60h4.2V208.35zM884.05,218.85V192.60h4.2V218.85zM888.93,229.35V213.60h4.2V229.35zM893.81,218.85V192.60h4.2V218.85zM898.70,239.85V234.60h4.2V239.85zM908.46,239.85V234.60h4.2V239.85zM913.35,239.85V234.60h4.2V239.85zM918.23,213.60V182.10h4.2V213.60zM928.00,239.85V234.60h4.2V239.85zM932.88,239.85V234.60h4.2V239.85zM937.76,229.35V213.60h4.2V229.35zM942.64,213.60V182.10h4.2V213.60zM952.41,234.60V224.10h4.2V234.60zM957.29,213.60V182.10h4.2V213.60zM962.18,208.35V171.60h4.2V208.35zM967.06,213.60V182.10h4.2V213.60zM971.94,229.35V213.60h4.2V229.35zM976.83,229.35V213.60h4.2V229.35zM981.71,239.85V234.60h4.2V239.85zM986.59,239.85V234.60h4.2V239.85zM1006.12,239.85V234.60h4.2V239.85zM1011.01,218.85V192.60h4.2V218.85zM1015.89,213.60V182.10h4.2V213.60zM1025.66,208.35V171.60h4.2V208.35zM1030.54,239.85V234.60h4.2V239.85zM1040.31,218.85V192.60h4.2V218.85zM1050.07,218.85V192.60h4.2V218.85zM1059.84,218.85V192.60h4.2V218.85zM1064.72,218.85V192.60h4.2V218.85zM1069.60,239.85V234.60h4.2V239.85zM1074.49,218.85V192.60h4.2V218.85zM1079.37,239.85V234.60h4.2V239.85zM1094.02,213.60V182.10h4.2V213.60zM1108.67,234.60V224.10h4.2V234.60zM1118.43,239.85V234.60h4.2V239.85zM1123.32,213.60V182.10h4.2V213.60zM1142.85,239.85V234.60h4.2V239.85zM1152.61,239.85V234.60h4.2V239.85zM1157.50,213.60V182.10h4.2V213.60zM1162.38,218.85V192.60h4.2V218.85zM1167.26,218.85V192.60h4.2V218.85zM1172.15,218.85V192.60h4.2V218.85zM1177.03,218.85V192.60h4.2V218.85zM1186.80,203.10V161.10h4.2V203.10zM1191.68,234.60V224.10h4.2V234.60zM1196.56,218.85V192.60h4.2V218.85zM1201.44,218.85V192.60h4.2V218.85zM1206.33,239.85V234.60h4.2V239.85zM1211.21,239.85V234.60h4.2V239.85zM1230.74,239.85V234.60h4.2V239.85zM1235.62,218.85V192.60h4.2V218.85zM1240.51,218.85V192.60h4.2V218.85zM1245.39,239.85V234.60h4.2V239.85zM1250.27,239.85V234.60h4.2V239.85zM1260.04,239.85V234.60h4.2V239.85zM1279.57,239.85V234.60h4.2V239.85zM1289.34,213.60V182.10h4.2V213.60zM1294.22,218.85V192.60h4.2V218.85zM1299.10,213.60V182.10h4.2V213.60zM1308.87,239.85V234.60h4.2V239.85zM1313.75,239.85V234.60h4.2V239.85zM1318.64,218.85V192.60h4.2V218.85zM1323.52,239.85V234.60h4.2V239.85zM1328.40,218.85V192.60h4.2V218.85zM1338.17,239.85V234.60h4.2V239.85zM1343.05,224.10V203.10h4.2V224.10zM1347.93,239.85V234.60h4.2V239.85zM1352.82,229.35V213.60h4.2V229.35zM1357.70,239.85V234.60h4.2V239.85zM1362.58,239.85V234.60h4.2V239.85zM1367.47,239.85V234.60h4.2V239.85zM1372.35,239.85V234.60h4.2V239.85zM1382.12,218.85V192.60h4.2V218.85zM1387.00,239.85V234.60h4.2V239.85zM1391.88,239.85V234.60h4.2V239.85zM1406.53,239.85V234.60h4.2V239.85zM1411.41,229.35V213.60h4.2V229.35zM1440.71,218.85V192.60h4.2V218.85zM1445.59,239.85V234.60h4.2V239.85zM1450.48,234.60V224.10h4.2V234.60zM1460.24,218.85V192.60h4.2V218.85zM1479.78,208.35V171.60h4.2V208.35zM1489.54,218.85V192.60h4.2V218.85zM1499.31,234.60V224.10h4.2V234.60zM1504.19,218.85V192.60h4.2V218.85zM1509.07,208.35V171.60h4.2V208.35zM1513.96,218.85V192.60h4.2V218.85zM1523.72,213.60V182.10h4.2V213.60zM1528.61,229.35V213.60h4.2V229.35zM1533.49,234.60V224.10h4.2V234.60zM1543.25,213.60V182.10h4.2V213.60zM1548.14,229.35V213.60h4.2V229.35zM1553.02,203.10V161.10h4.2V203.10z" fill="#98a7fc"/>
<text x="851.8" y="142.0" font-size="8.4" fill="#555" stroke="#555" stroke-width="0.22" textLength="25.0" lengthAdjust="spacingAndGlyphs" text-anchor="end">2 /min</text>
<text x="851.8" y="194.5" font-size="8.4" fill="#555" stroke="#555" stroke-width="0.22" textLength="25.0" lengthAdjust="spacingAndGlyphs" text-anchor="end">1 /min</text>
<text x="851.8" y="246.4" font-size="8.4" fill="#555" stroke="#555" stroke-width="0.22" textLength="25.0" lengthAdjust="spacingAndGlyphs" text-anchor="end">0 /min</text>
<line x1="876.2" y1="245.1" x2="876.2" y2="250.1" stroke="#dcdcdc" stroke-width="1"/>
<text x="876.2" y="258.6" font-size="8.4" fill="#555" stroke="#555" stroke-width="0.22" textLength="20.8" lengthAdjust="spacingAndGlyphs" text-anchor="middle">16:00</text>
<line x1="934.8" y1="245.1" x2="934.8" y2="250.1" stroke="#dcdcdc" stroke-width="1"/>
<text x="934.8" y="258.6" font-size="8.4" fill="#555" stroke="#555" stroke-width="0.22" textLength="20.8" lengthAdjust="spacingAndGlyphs" text-anchor="middle">18:00</text>
<line x1="993.4" y1="245.1" x2="993.4" y2="250.1" stroke="#dcdcdc" stroke-width="1"/>
<text x="993.4" y="258.6" font-size="8.4" fill="#555" stroke="#555" stroke-width="0.22" textLength="20.8" lengthAdjust="spacingAndGlyphs" text-anchor="middle">20:00</text>
<line x1="1052.0" y1="245.1" x2="1052.0" y2="250.1" stroke="#dcdcdc" stroke-width="1"/>
<text x="1052.0" y="258.6" font-size="8.4" fill="#555" stroke="#555" stroke-width="0.22" textLength="20.8" lengthAdjust="spacingAndGlyphs" text-anchor="middle">22:00</text>
<line x1="1110.6" y1="245.1" x2="1110.6" y2="250.1" stroke="#dcdcdc" stroke-width="1"/>
<text x="1110.6" y="258.6" font-size="8.4" fill="#555" stroke="#555" stroke-width="0.22" textLength="23.0" lengthAdjust="spacingAndGlyphs" text-anchor="middle">17. Jul</text>
<line x1="1169.2" y1="245.1" x2="1169.2" y2="250.1" stroke="#dcdcdc" stroke-width="1"/>
<text x="1169.2" y="258.6" font-size="8.4" fill="#555" stroke="#555" stroke-width="0.22" textLength="20.8" lengthAdjust="spacingAndGlyphs" text-anchor="middle">02:00</text>
<line x1="1227.8" y1="245.1" x2="1227.8" y2="250.1" stroke="#dcdcdc" stroke-width="1"/>
<text x="1227.8" y="258.6" font-size="8.4" fill="#555" stroke="#555" stroke-width="0.22" textLength="20.8" lengthAdjust="spacingAndGlyphs" text-anchor="middle">04:00</text>
<line x1="1286.4" y1="245.1" x2="1286.4" y2="250.1" stroke="#dcdcdc" stroke-width="1"/>
<text x="1286.4" y="258.6" font-size="8.4" fill="#555" stroke="#555" stroke-width="0.22" textLength="20.8" lengthAdjust="spacingAndGlyphs" text-anchor="middle">06:00</text>
<line x1="1345.0" y1="245.1" x2="1345.0" y2="250.1" stroke="#dcdcdc" stroke-width="1"/>
<text x="1345.0" y="258.6" font-size="8.4" fill="#555" stroke="#555" stroke-width="0.22" textLength="20.8" lengthAdjust="spacingAndGlyphs" text-anchor="middle">08:00</text>
<line x1="1403.6" y1="245.1" x2="1403.6" y2="250.1" stroke="#dcdcdc" stroke-width="1"/>
<text x="1403.6" y="258.6" font-size="8.4" fill="#555" stroke="#555" stroke-width="0.22" textLength="20.8" lengthAdjust="spacingAndGlyphs" text-anchor="middle">10:00</text>
<line x1="1462.2" y1="245.1" x2="1462.2" y2="250.1" stroke="#dcdcdc" stroke-width="1"/>
<text x="1462.2" y="258.6" font-size="8.4" fill="#555" stroke="#555" stroke-width="0.22" textLength="20.8" lengthAdjust="spacingAndGlyphs" text-anchor="middle">12:00</text>
<line x1="1520.8" y1="245.1" x2="1520.8" y2="250.1" stroke="#dcdcdc" stroke-width="1"/>
<text x="1520.8" y="258.6" font-size="8.4" fill="#555" stroke="#555" stroke-width="0.22" textLength="20.8" lengthAdjust="spacingAndGlyphs" text-anchor="middle">14:00</text>
<rect x="1096.50" y="279.10" width="1.60" height="4.00" fill="#00a0ae"/>
<rect x="1099.50" y="274.10" width="1.60" height="9.00" fill="#00a0ae"/>
<rect x="1102.50" y="280.10" width="1.60" height="3.00" fill="#00a0ae"/>
<rect x="1105.50" y="277.10" width="1.60" height="6.00" fill="#00a0ae"/>
<text x="1111.0" y="282.6" font-size="8.5" fill="#454646" stroke="#454646" stroke-width="0.22" textLength="59.0" lengthAdjust="spacingAndGlyphs">Request errors</text>
<rect x="1185.00" y="279.10" width="1.60" height="4.00" fill="#98a7fc"/>
<rect x="1188.00" y="274.10" width="1.60" height="9.00" fill="#98a7fc"/>
<rect x="1191.00" y="280.10" width="1.60" height="3.00" fill="#98a7fc"/>
<rect x="1194.00" y="277.10" width="1.60" height="6.00" fill="#98a7fc"/>
<text x="1199.0" y="282.6" font-size="8.5" fill="#454646" stroke="#454646" stroke-width="0.22" textLength="66.0" lengthAdjust="spacingAndGlyphs">JavaScript errors</text>
<rect x="1281.00" y="279.10" width="1.60" height="4.00" fill="#f7c98a"/>
<rect x="1284.00" y="274.10" width="1.60" height="9.00" fill="#f7c98a"/>
<rect x="1287.00" y="280.10" width="1.60" height="3.00" fill="#f7c98a"/>
<rect x="1290.00" y="277.10" width="1.60" height="6.00" fill="#f7c98a"/>
<text x="1294.5" y="282.6" font-size="8.5" fill="#454646" stroke="#454646" stroke-width="0.22" textLength="58.5" lengthAdjust="spacingAndGlyphs">Custom errors</text>
<text x="820.5" y="332.6" font-size="13.7" fill="#454646" stroke="#454646" stroke-width="0.22" textLength="85.5" lengthAdjust="spacingAndGlyphs">Errors by origin</text>
<rect x="862.5" y="364.6" width="710.0" height="105.5" fill="none" stroke="#ececec" stroke-width="1"/>
<line x1="862.5" y1="417.1" x2="1572.5" y2="417.1" stroke="#efefef" stroke-width="1"/>
<path d="M869.40,470.10V464.85h4.2V470.10zM874.28,470.10V407.10h4.2V470.10zM879.17,470.10V412.35h4.2V470.10zM884.05,470.10V438.60h4.2V470.10zM888.93,470.10V454.35h4.2V470.10zM893.81,470.10V422.85h4.2V470.10zM898.70,470.10V459.60h4.2V470.10zM908.46,470.10V459.60h4.2V470.10zM913.35,470.10V459.60h4.2V470.10zM918.23,470.10V407.10h4.2V470.10zM928.00,470.10V459.60h4.2V470.10zM932.88,470.10V459.60h4.2V470.10zM937.76,470.10V443.85h4.2V470.10zM942.64,470.10V407.10h4.2V470.10zM952.41,470.10V459.60h4.2V470.10zM957.29,470.10V428.10h4.2V470.10zM962.18,470.10V407.10h4.2V470.10zM967.06,470.10V412.35h4.2V470.10zM971.94,470.10V454.35h4.2V470.10zM976.83,470.10V449.10h4.2V470.10zM981.71,470.10V459.60h4.2V470.10zM986.59,470.10V459.60h4.2V470.10zM1006.12,470.10V459.60h4.2V470.10zM1011.01,470.10V417.60h4.2V470.10zM1015.89,470.10V417.60h4.2V470.10zM1025.66,470.10V417.60h4.2V470.10zM1030.54,470.10V459.60h4.2V470.10zM1040.31,470.10V428.10h4.2V470.10zM1050.07,470.10V433.35h4.2V470.10zM1059.84,470.10V428.10h4.2V470.10zM1064.72,470.10V433.35h4.2V470.10zM1069.60,470.10V464.85h4.2V470.10zM1074.49,470.10V417.60h4.2V470.10zM1079.37,470.10V459.60h4.2V470.10zM1094.02,470.10V428.10h4.2V470.10zM1108.67,470.10V454.35h4.2V470.10zM1118.43,470.10V459.60h4.2V470.10zM1123.32,470.10V407.10h4.2V470.10zM1142.85,470.10V464.85h4.2V470.10zM1152.61,470.10V464.85h4.2V470.10zM1157.50,470.10V412.35h4.2V470.10zM1162.38,470.10V433.35h4.2V470.10zM1167.26,470.10V433.35h4.2V470.10zM1172.15,470.10V428.10h4.2V470.10zM1177.03,470.10V428.10h4.2V470.10zM1186.80,470.10V417.60h4.2V470.10zM1191.68,470.10V454.35h4.2V470.10zM1196.56,470.10V417.60h4.2V470.10zM1201.44,470.10V417.60h4.2V470.10zM1206.33,470.10V459.60h4.2V470.10zM1211.21,470.10V459.60h4.2V470.10zM1230.74,470.10V459.60h4.2V470.10zM1235.62,470.10V438.60h4.2V470.10zM1240.51,470.10V438.60h4.2V470.10zM1245.39,470.10V464.85h4.2V470.10zM1250.27,470.10V459.60h4.2V470.10zM1260.04,470.10V464.85h4.2V470.10zM1279.57,470.10V464.85h4.2V470.10zM1289.34,470.10V407.10h4.2V470.10zM1294.22,470.10V417.60h4.2V470.10zM1299.10,470.10V412.35h4.2V470.10zM1308.87,470.10V464.85h4.2V470.10zM1313.75,470.10V464.85h4.2V470.10zM1318.64,470.10V428.10h4.2V470.10zM1323.52,470.10V464.85h4.2V470.10zM1328.40,470.10V417.60h4.2V470.10zM1338.17,470.10V459.60h4.2V470.10zM1343.05,470.10V428.10h4.2V470.10zM1347.93,470.10V459.60h4.2V470.10zM1352.82,470.10V438.60h4.2V470.10zM1357.70,470.10V464.85h4.2V470.10zM1362.58,470.10V459.60h4.2V470.10zM1367.47,470.10V459.60h4.2V470.10zM1372.35,470.10V464.85h4.2V470.10zM1382.12,470.10V428.10h4.2V470.10zM1387.00,470.10V464.85h4.2V470.10zM1391.88,470.10V464.85h4.2V470.10zM1406.53,470.10V459.60h4.2V470.10zM1411.41,470.10V438.60h4.2V470.10zM1440.71,470.10V438.60h4.2V470.10zM1445.59,470.10V459.60h4.2V470.10zM1450.48,470.10V459.60h4.2V470.10zM1460.24,470.10V417.60h4.2V470.10zM1479.78,470.10V412.35h4.2V470.10zM1489.54,470.10V422.85h4.2V470.10zM1499.31,470.10V454.35h4.2V470.10zM1504.19,470.10V422.85h4.2V470.10zM1509.07,470.10V417.60h4.2V470.10zM1513.96,470.10V417.60h4.2V470.10zM1523.72,470.10V422.85h4.2V470.10zM1528.61,470.10V438.60h4.2V470.10zM1533.49,470.10V449.10h4.2V470.10zM1543.25,470.10V422.85h4.2V470.10zM1548.14,470.10V438.60h4.2V470.10zM1553.02,470.10V401.85h4.2V470.10z" fill="#5a1a7c"/>
<path d="M869.40,464.85V459.60h4.2V464.85zM879.17,412.35V396.60h4.2V412.35zM884.05,438.60V417.60h4.2V438.60zM888.93,454.35V438.60h4.2V454.35zM893.81,422.85V417.60h4.2V422.85zM937.76,443.85V438.60h4.2V443.85zM952.41,459.60V449.10h4.2V459.60zM957.29,428.10V407.10h4.2V428.10zM962.18,407.10V396.60h4.2V407.10zM967.06,412.35V407.10h4.2V412.35zM971.94,454.35V438.60h4.2V454.35zM976.83,449.10V438.60h4.2V449.10zM1015.89,417.60V407.10h4.2V417.60zM1025.66,417.60V396.60h4.2V417.60zM1040.31,428.10V417.60h4.2V428.10zM1050.07,433.35V417.60h4.2V433.35zM1059.84,428.10V417.60h4.2V428.10zM1064.72,433.35V417.60h4.2V433.35zM1069.60,464.85V459.60h4.2V464.85zM1094.02,428.10V407.10h4.2V428.10zM1108.67,454.35V449.10h4.2V454.35zM1142.85,464.85V459.60h4.2V464.85zM1152.61,464.85V459.60h4.2V464.85zM1157.50,412.35V407.10h4.2V412.35zM1162.38,433.35V417.60h4.2V433.35zM1167.26,433.35V417.60h4.2V433.35zM1172.15,428.10V417.60h4.2V428.10zM1177.03,428.10V417.60h4.2V428.10zM1186.80,417.60V386.10h4.2V417.60zM1191.68,454.35V449.10h4.2V454.35zM1235.62,438.60V417.60h4.2V438.60zM1240.51,438.60V417.60h4.2V438.60zM1245.39,464.85V459.60h4.2V464.85zM1260.04,464.85V459.60h4.2V464.85zM1279.57,464.85V459.60h4.2V464.85zM1299.10,412.35V407.10h4.2V412.35zM1308.87,464.85V459.60h4.2V464.85zM1313.75,464.85V459.60h4.2V464.85zM1318.64,428.10V417.60h4.2V428.10zM1323.52,464.85V459.60h4.2V464.85zM1357.70,464.85V459.60h4.2V464.85zM1372.35,464.85V459.60h4.2V464.85zM1382.12,428.10V417.60h4.2V428.10zM1387.00,464.85V459.60h4.2V464.85zM1391.88,464.85V459.60h4.2V464.85zM1440.71,438.60V417.60h4.2V438.60zM1450.48,459.60V449.10h4.2V459.60zM1479.78,412.35V396.60h4.2V412.35zM1489.54,422.85V417.60h4.2V422.85zM1499.31,454.35V449.10h4.2V454.35zM1504.19,422.85V417.60h4.2V422.85zM1509.07,417.60V396.60h4.2V417.60zM1523.72,422.85V407.10h4.2V422.85zM1543.25,422.85V407.10h4.2V422.85zM1553.02,401.85V386.10h4.2V401.85z" fill="#e0b3f4"/>
<text x="851.8" y="367.0" font-size="8.4" fill="#555" stroke="#555" stroke-width="0.22" textLength="25.0" lengthAdjust="spacingAndGlyphs" text-anchor="end">2 /min</text>
<text x="851.8" y="419.5" font-size="8.4" fill="#555" stroke="#555" stroke-width="0.22" textLength="25.0" lengthAdjust="spacingAndGlyphs" text-anchor="end">1 /min</text>
<text x="851.8" y="471.4" font-size="8.4" fill="#555" stroke="#555" stroke-width="0.22" textLength="25.0" lengthAdjust="spacingAndGlyphs" text-anchor="end">0 /min</text>
<line x1="876.2" y1="470.1" x2="876.2" y2="475.1" stroke="#dcdcdc" stroke-width="1"/>
<text x="876.2" y="483.6" font-size="8.4" fill="#555" stroke="#555" stroke-width="0.22" textLength="20.8" lengthAdjust="spacingAndGlyphs" text-anchor="middle">16:00</text>
<line x1="934.8" y1="470.1" x2="934.8" y2="475.1" stroke="#dcdcdc" stroke-width="1"/>
<text x="934.8" y="483.6" font-size="8.4" fill="#555" stroke="#555" stroke-width="0.22" textLength="20.8" lengthAdjust="spacingAndGlyphs" text-anchor="middle">18:00</text>
<line x1="993.4" y1="470.1" x2="993.4" y2="475.1" stroke="#dcdcdc" stroke-width="1"/>
<text x="993.4" y="483.6" font-size="8.4" fill="#555" stroke="#555" stroke-width="0.22" textLength="20.8" lengthAdjust="spacingAndGlyphs" text-anchor="middle">20:00</text>
<line x1="1052.0" y1="470.1" x2="1052.0" y2="475.1" stroke="#dcdcdc" stroke-width="1"/>
<text x="1052.0" y="483.6" font-size="8.4" fill="#555" stroke="#555" stroke-width="0.22" textLength="20.8" lengthAdjust="spacingAndGlyphs" text-anchor="middle">22:00</text>
<line x1="1110.6" y1="470.1" x2="1110.6" y2="475.1" stroke="#dcdcdc" stroke-width="1"/>
<text x="1110.6" y="483.6" font-size="8.4" fill="#555" stroke="#555" stroke-width="0.22" textLength="23.0" lengthAdjust="spacingAndGlyphs" text-anchor="middle">17. Jul</text>
<line x1="1169.2" y1="470.1" x2="1169.2" y2="475.1" stroke="#dcdcdc" stroke-width="1"/>
<text x="1169.2" y="483.6" font-size="8.4" fill="#555" stroke="#555" stroke-width="0.22" textLength="20.8" lengthAdjust="spacingAndGlyphs" text-anchor="middle">02:00</text>
<line x1="1227.8" y1="470.1" x2="1227.8" y2="475.1" stroke="#dcdcdc" stroke-width="1"/>
<text x="1227.8" y="483.6" font-size="8.4" fill="#555" stroke="#555" stroke-width="0.22" textLength="20.8" lengthAdjust="spacingAndGlyphs" text-anchor="middle">04:00</text>
<line x1="1286.4" y1="470.1" x2="1286.4" y2="475.1" stroke="#dcdcdc" stroke-width="1"/>
<text x="1286.4" y="483.6" font-size="8.4" fill="#555" stroke="#555" stroke-width="0.22" textLength="20.8" lengthAdjust="spacingAndGlyphs" text-anchor="middle">06:00</text>
<line x1="1345.0" y1="470.1" x2="1345.0" y2="475.1" stroke="#dcdcdc" stroke-width="1"/>
<text x="1345.0" y="483.6" font-size="8.4" fill="#555" stroke="#555" stroke-width="0.22" textLength="20.8" lengthAdjust="spacingAndGlyphs" text-anchor="middle">08:00</text>
<line x1="1403.6" y1="470.1" x2="1403.6" y2="475.1" stroke="#dcdcdc" stroke-width="1"/>
<text x="1403.6" y="483.6" font-size="8.4" fill="#555" stroke="#555" stroke-width="0.22" textLength="20.8" lengthAdjust="spacingAndGlyphs" text-anchor="middle">10:00</text>
<line x1="1462.2" y1="470.1" x2="1462.2" y2="475.1" stroke="#dcdcdc" stroke-width="1"/>
<text x="1462.2" y="483.6" font-size="8.4" fill="#555" stroke="#555" stroke-width="0.22" textLength="20.8" lengthAdjust="spacingAndGlyphs" text-anchor="middle">12:00</text>
<line x1="1520.8" y1="470.1" x2="1520.8" y2="475.1" stroke="#dcdcdc" stroke-width="1"/>
<text x="1520.8" y="483.6" font-size="8.4" fill="#555" stroke="#555" stroke-width="0.22" textLength="20.8" lengthAdjust="spacingAndGlyphs" text-anchor="middle">14:00</text>
<rect x="1079.00" y="504.10" width="1.60" height="4.00" fill="#e0b3f4"/>
<rect x="1082.00" y="499.10" width="1.60" height="9.00" fill="#e0b3f4"/>
<rect x="1085.00" y="505.10" width="1.60" height="3.00" fill="#e0b3f4"/>
<rect x="1088.00" y="502.10" width="1.60" height="6.00" fill="#e0b3f4"/>
<text x="1093.5" y="507.6" font-size="8.5" fill="#454646" stroke="#454646" stroke-width="0.22" textLength="61.5" lengthAdjust="spacingAndGlyphs">1st Party Errors</text>
<rect x="1169.00" y="504.10" width="1.60" height="4.00" fill="#5a1a7c"/>
<rect x="1172.00" y="499.10" width="1.60" height="9.00" fill="#5a1a7c"/>
<rect x="1175.00" y="505.10" width="1.60" height="3.00" fill="#5a1a7c"/>
<rect x="1178.00" y="502.10" width="1.60" height="6.00" fill="#5a1a7c"/>
<text x="1184.0" y="507.6" font-size="8.5" fill="#454646" stroke="#454646" stroke-width="0.22" textLength="63.5" lengthAdjust="spacingAndGlyphs">3rd Party Errors</text>
<rect x="1261.50" y="504.10" width="1.60" height="4.00" fill="#a44dca"/>
<rect x="1264.50" y="499.10" width="1.60" height="9.00" fill="#a44dca"/>
<rect x="1267.50" y="505.10" width="1.60" height="3.00" fill="#a44dca"/>
<rect x="1270.50" y="502.10" width="1.60" height="6.00" fill="#a44dca"/>
<text x="1276.0" y="507.6" font-size="8.5" fill="#454646" stroke="#454646" stroke-width="0.22" textLength="45.5" lengthAdjust="spacingAndGlyphs">CDN Errors</text>
<text x="820.3" y="550.6" font-size="12.6" fill="#454646" stroke="#454646" stroke-width="0.22" textLength="56.0" lengthAdjust="spacingAndGlyphs">Top errors</text>
<text x="820.3" y="571.9" font-size="9.4" fill="#454646" stroke="#454646" stroke-width="0.22" textLength="332.2" lengthAdjust="spacingAndGlyphs">A change in error levels may indicate a device- or browser-specific problem.</text>
<rect x="819.80" y="605.20" width="250.20" height="1.40" fill="#a76ccb"/>
<rect x="1073.00" y="585.80" width="252.00" height="20.80" fill="#7b35a0"/>
<rect x="1328.00" y="605.20" width="250.00" height="1.40" fill="#a76ccb"/>
<text x="898.8" y="599.6" font-size="8.8" fill="#454646" stroke="#454646" stroke-width="0.22" textLength="94.2" lengthAdjust="spacingAndGlyphs">Requests (&lt;0.01 /min)</text>
<text x="1157.0" y="599.8" font-size="8.8" fill="#ffffff" stroke="#ffffff" stroke-width="0.22" textLength="95.4" lengthAdjust="spacingAndGlyphs">JavaScript (0.09 /min)</text>
<text x="1434.0" y="600.0" font-size="8.8" fill="#454646" stroke="#454646" stroke-width="0.22" textLength="33.0" lengthAdjust="spacingAndGlyphs">Custom</text>
<text x="831.5" y="626.9" font-size="8.2" fill="#454646" stroke="#454646" stroke-width="0.22" textLength="18.9" lengthAdjust="spacingAndGlyphs">Error</text>
<text x="1527.5" y="626.9" font-size="8.2" fill="#454646" stroke="#454646" stroke-width="0.22" textLength="40.1" lengthAdjust="spacingAndGlyphs">Frequency</text>
<rect x="820.00" y="635.00" width="759.00" height="1.80" fill="#ebebeb"/>
<rect x="820.00" y="664.40" width="759.00" height="27.50" fill="#f8f8f7"/>
<text x="832.4" y="653.8" font-size="9.0" fill="#1aa8cc" stroke="#1aa8cc" stroke-width="0.22" textLength="450.0" lengthAdjust="spacingAndGlyphs">Http failure response for https://easytravel-ang.lab.dynatrace.org/easytravel/rest/login: 403 Forbidden</text>
<text x="1285.5" y="653.8" font-size="9.0" fill="#454646" stroke="#454646" stroke-width="0.22" textLength="5.5" lengthAdjust="spacingAndGlyphs">–</text>
<text x="1293.5" y="653.8" font-size="9.0" fill="#454646" stroke="#454646" stroke-width="0.22" textLength="206.3" lengthAdjust="spacingAndGlyphs">ruxitagentjs_ICA2QSVfghqrtu_10175190711172318.js</text>
<text x="1531.0" y="653.8" font-size="9.6" fill="#3e3e3e" stroke="#3e3e3e" stroke-width="0.22" textLength="18.5" lengthAdjust="spacingAndGlyphs">0.04</text>
<text x="1552.5" y="653.8" font-size="7.5" fill="#454646" stroke="#454646" stroke-width="0.22" textLength="14.8" lengthAdjust="spacingAndGlyphs">/min</text>
<text x="832.4" y="681.9" font-size="9.0" fill="#1aa8cc" stroke="#1aa8cc" stroke-width="0.22" textLength="450.0" lengthAdjust="spacingAndGlyphs">Http failure response for https://easytravel-ang.lab.dynatrace.org/easytravel/rest/login: 403 Forbidden</text>
<text x="1285.5" y="681.9" font-size="9.0" fill="#454646" stroke="#454646" stroke-width="0.22" textLength="5.5" lengthAdjust="spacingAndGlyphs">–</text>
<text x="1293.5" y="681.9" font-size="9.0" fill="#454646" stroke="#454646" stroke-width="0.22" textLength="208.8" lengthAdjust="spacingAndGlyphs">ruxitagentjs_ICA2QSVfghqrtu_10175190716155550.js</text>
<text x="1531.0" y="681.9" font-size="9.6" fill="#3e3e3e" stroke="#3e3e3e" stroke-width="0.22" textLength="18.5" lengthAdjust="spacingAndGlyphs">0.04</text>
<text x="1552.5" y="681.9" font-size="7.5" fill="#454646" stroke="#454646" stroke-width="0.22" textLength="14.8" lengthAdjust="spacingAndGlyphs">/min</text>
<rect x="1494" y="713.4" width="84.8" height="22.2" rx="1.5" fill="#00a1b2"/>
<text x="1505.2" y="728.5" font-size="9.8" fill="#ffffff" stroke="#ffffff" stroke-width="0.22" textLength="62.5" lengthAdjust="spacingAndGlyphs">Analyze errors</text>
<path d="M1192.6,757 L1199.6,750 L1206.6,757" fill="none" stroke="#1aa3c0" stroke-width="2.4"/>
</svg></body></html>
